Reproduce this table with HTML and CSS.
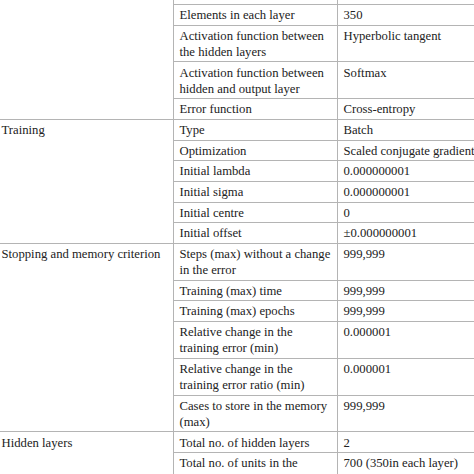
FILE: index.html
```html
<!DOCTYPE html>
<html>
<head>
<meta charset="utf-8">
<link rel="stylesheet" href="styles.css">
</head>
<body>
<table class="params">
  <colgroup>
    <col class="c-group">
    <col class="c-name">
    <col class="c-value">
  </colgroup>
  <tbody>
    <tr class="partial">
      <td class="group" rowspan="5"></td>
      <td class="name"></td>
      <td class="value"></td>
    </tr>
    <tr><td class="name">Elements in each layer</td><td class="value">350</td></tr>
    <tr><td class="name">Activation function between<br>the hidden layers</td><td class="value">Hyperbolic tangent</td></tr>
    <tr><td class="name">Activation function between<br>hidden and output layer</td><td class="value">Softmax</td></tr>
    <tr><td class="name">Error function</td><td class="value">Cross-entropy</td></tr>

    <tr><td class="group" rowspan="6">Training</td><td class="name">Type</td><td class="value">Batch</td></tr>
    <tr><td class="name">Optimization</td><td class="value">Scaled conjugate gradient</td></tr>
    <tr><td class="name">Initial lambda</td><td class="value">0.000000001</td></tr>
    <tr><td class="name">Initial sigma</td><td class="value">0.000000001</td></tr>
    <tr><td class="name">Initial centre</td><td class="value">0</td></tr>
    <tr><td class="name">Initial offset</td><td class="value">±0.000000001</td></tr>

    <tr><td class="group" rowspan="6">Stopping and memory criterion</td><td class="name">Steps (max) without a change<br>in the error</td><td class="value">999,999</td></tr>
    <tr><td class="name">Training (max) time</td><td class="value">999,999</td></tr>
    <tr><td class="name">Training (max) epochs</td><td class="value">999,999</td></tr>
    <tr><td class="name">Relative change in the<br>training error (min)</td><td class="value">0.000001</td></tr>
    <tr><td class="name">Relative change in the<br>training error ratio (min)</td><td class="value">0.000001</td></tr>
    <tr><td class="name">Cases to store in the memory<br>(max)</td><td class="value">999,999</td></tr>

    <tr><td class="group" rowspan="2">Hidden layers</td><td class="name">Total no. of hidden layers</td><td class="value">2</td></tr>
    <tr><td class="name">Total no. of units in the<br>hidden layers</td><td class="value">700 (350in each layer)</td></tr>
  </tbody>
</table>
</body>
</html>
```

FILE: styles.css
```css
html, body {
  margin: 0;
  padding: 0;
  background: #ffffff;
  overflow: hidden;
  width: 474px;
  height: 474px;
}

.params {
  border-collapse: collapse;
  table-layout: fixed;
  width: 580px;
  font-family: "Liberation Serif", "Times New Roman", serif;
  font-size: 12.7px;
  line-height: 16.2px;
  color: #222222;
}

.c-group { width: 173.5px; }
.c-name { width: 164px; }
.c-value { width: 242.5px; }

.params td {
  padding: 2.05px 5px 1.4px 5.5px;
  vertical-align: top;
  white-space: nowrap;
  border-bottom: 1px solid #b4b4b4;
  overflow: hidden;
}

.params td.group {
  padding-left: 1.5px;
  border-right: 1px solid #b4b4b4;
}

.params td.name {
  border-right: 1px solid #b4b4b4;
}

.params tr.partial td {
  height: 4px;
  padding: 0;
  line-height: 4px;
}
```
